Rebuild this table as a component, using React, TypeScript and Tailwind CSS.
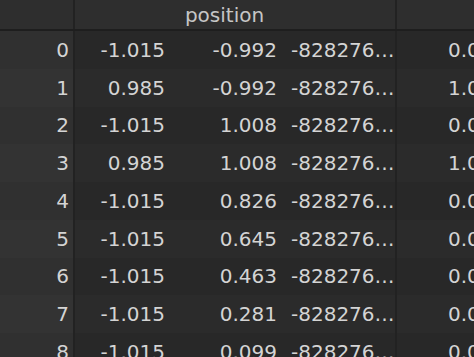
import React from "react";

const rows = [
  { x: "-1.015", y: "-0.992", z: "-828276…", w: "0.000" },
  { x: "0.985", y: "-0.992", z: "-828276…", w: "1.000" },
  { x: "-1.015", y: "1.008", z: "-828276…", w: "0.000" },
  { x: "0.985", y: "1.008", z: "-828276…", w: "1.000" },
  { x: "-1.015", y: "0.826", z: "-828276…", w: "0.000" },
  { x: "-1.015", y: "0.645", z: "-828276…", w: "0.000" },
  { x: "-1.015", y: "0.463", z: "-828276…", w: "0.000" },
  { x: "-1.015", y: "0.281", z: "-828276…", w: "0.000" },
  { x: "-1.015", y: "0.099", z: "-828276…", w: "0.000" },
];

export default function App() {
  return (
    <div
      className="w-[474px] h-[357px] overflow-hidden bg-[#282828] text-[20px] text-[#d4d4d4]"
      style={{ fontFamily: '"DejaVu Sans", sans-serif' }}
    >
      {/* Header */}
      <div className="flex h-[31px] bg-[#2e2e2e] border-b-2 border-[#1e1e1e]">
        <div className="w-[75px] shrink-0 border-r-2 border-[#222222]" />
        <div className="w-[322px] shrink-0 border-r-2 border-[#222222] flex items-center justify-center pr-[21px] leading-none text-[#c6c6c6]">
          position
        </div>
        <div className="flex-1" />
      </div>

      {/* Rows */}
      {rows.map((r, i) => (
        <div
          key={i}
          className={`flex h-[37.75px] items-center leading-none ${i % 2 === 1 ? "bg-[#2b2b2b]" : "bg-[#282828]"}`}
        >
          <div
            className={`w-[75px] h-full shrink-0 border-r-2 border-[#222222] flex items-center justify-end pr-[4px] ${i % 2 === 1 ? "bg-[#333333]" : "bg-[#303030]"}`}
          >
            {i}
          </div>
          <div className="w-[322px] h-full shrink-0 border-r-2 border-[#222222] flex items-center whitespace-nowrap">
            <div className="w-[90px] text-right">{r.x}</div>
            <div className="w-[112px] text-right">{r.y}</div>
            <div className="pl-[14px]">{r.z}</div>
          </div>
          <div className="flex-1 h-full flex items-center pl-[51px] whitespace-nowrap overflow-hidden">
            {r.w}
          </div>
        </div>
      ))}
    </div>
  );
}
